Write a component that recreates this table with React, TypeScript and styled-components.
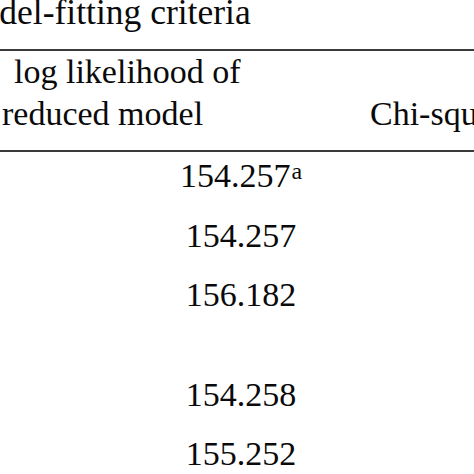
import React from "react";
import styled, { createGlobalStyle } from "styled-components";

const Global = createGlobalStyle`
  html, body { margin: 0; padding: 0; background: #ffffff; }
`;

const Page = styled.div`
  width: 474px;
  height: 474px;
  overflow: hidden;
  background: #ffffff;
  color: #0a0a0a;
  font-family: "Liberation Serif", "Times New Roman", serif;
  font-size: 34px;
  display: flex;
  flex-direction: column;
`;

const Title = styled.div`
  font-size: 35.5px;
  line-height: 24px;
  height: 25px;
  margin-left: -50px;
  white-space: nowrap;
`;

const Rule = styled.div<{ $top: number }>`
  height: 2px;
  flex: 0 0 2px;
  background: #3a3a3a;
  margin-top: ${(p) => p.$top}px;
`;

const Header = styled.div`
  display: grid;
  grid-template-columns: 254px 1fr;
  column-gap: 114px;
  padding-left: 2px;
  line-height: 42px;
  align-items: end;
  padding-bottom: 15px;
`;

const HeadCell = styled.div`
  display: flex;
  flex-direction: column;
  white-space: nowrap;
`;

const HeadLine = styled.span<{ $indent?: number }>`
  padding-left: ${(p) => p.$indent ?? 0}px;
`;

const DataList = styled.div`
  margin-left: 132px;
  width: 218px;
  display: flex;
  flex-direction: column;
`;

const Row = styled.div<{ $gapBefore?: number }>`
  line-height: 47px;
  padding-bottom: 12.5px;
  margin-top: ${(p) => p.$gapBefore ?? 0}px;
  text-align: center;
  white-space: nowrap;
`;

const Note = styled.sup`
  font-size: 24px;
  line-height: 0;
  vertical-align: 8px;
  margin-left: 1px;
`;

const rows: { value: string; note?: string; gap?: number }[] = [
  { value: "154.257", note: "a" },
  { value: "154.257" },
  { value: "156.182" },
  { value: "154.258", gap: 40 },
  { value: "155.252" },
];

export default function App() {
  return (
    <>
      <Global />
      <Page>
        <Title>Model-fitting criteria</Title>
        <Rule $top={25} />
        <Header>
          <HeadCell>
            <HeadLine $indent={12}>log likelihood of</HeadLine>
            <HeadLine>reduced model</HeadLine>
          </HeadCell>
          <HeadCell>
            <HeadLine>Chi-square</HeadLine>
          </HeadCell>
        </Header>
        <Rule $top={0} />
        <DataList>
          {rows.map((r, i) => (
            <Row key={i} $gapBefore={r.gap}>
              {r.value}
              {r.note && <Note>{r.note}</Note>}
            </Row>
          ))}
        </DataList>
      </Page>
    </>
  );
}
